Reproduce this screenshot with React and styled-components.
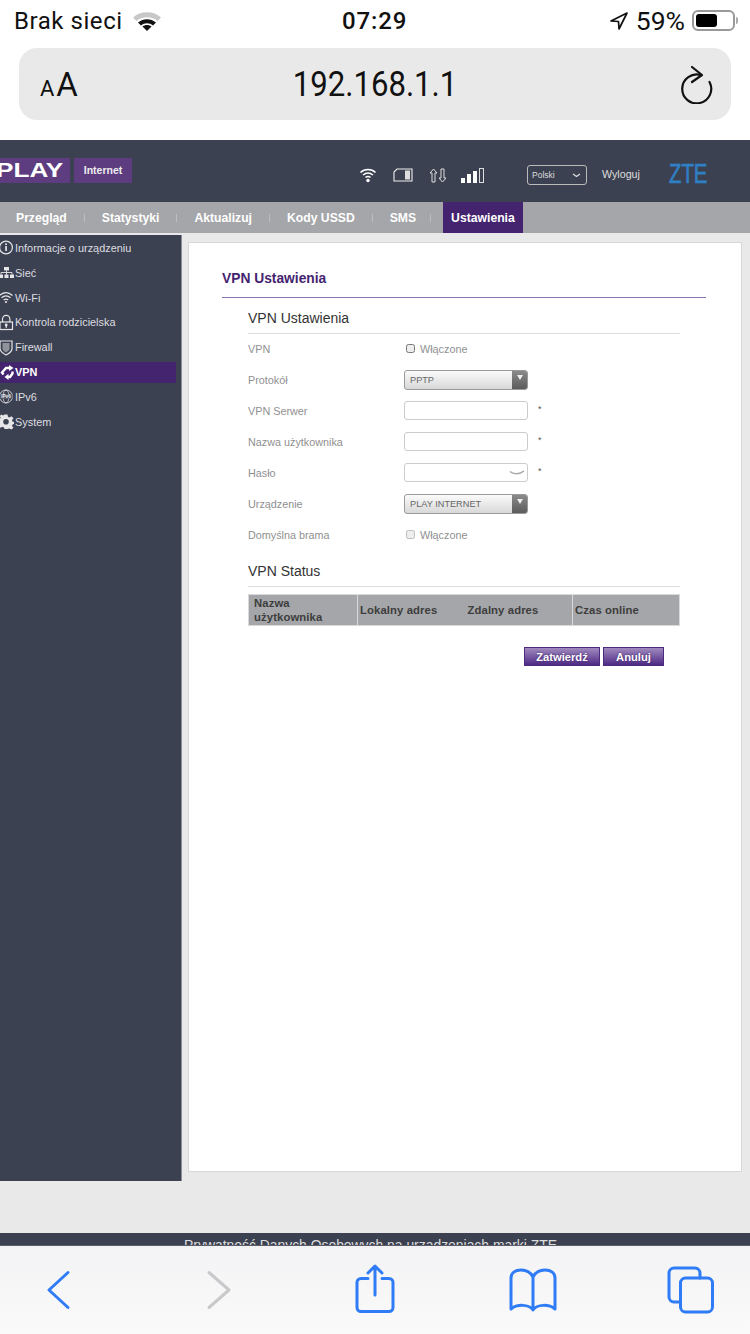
import React from "react";
import styled, { createGlobalStyle } from "styled-components";

const Global = createGlobalStyle`
  html, body { margin: 0; padding: 0; background: #fff; }
  * { box-sizing: border-box; }
  body { font-family: "Liberation Sans", Arial, sans-serif; }
`;

const Screen = styled.div`
  width: 750px; height: 1334px; overflow: hidden;
  display: flex; flex-direction: column; background: #e9e9e9;
`;
const Chrome = styled.header`
  height: 140px; background: #fff; padding: 0 15px 0 14px; flex: none;
`;
const StatusBar = styled.div`
  height: 48px; display: flex; justify-content: space-between; position: relative;
  align-items: center; font-family: Roboto, sans-serif; font-size: 24px; color: #111;
  padding-bottom: 7px;
`;
const StatusLeft = styled.div`display: flex; align-items: center; gap: 9px; letter-spacing: .55px;`;
const StatusRight = styled.div`display: flex; align-items: center; gap: 7px;`;
const Percent = styled.span`font-size: 26.5px; line-height: 28px;`;
const Clock = styled.div`
  position: absolute; left: 328px; top: 7px; font-weight: 500; letter-spacing: .9px; line-height: 28px;
`;
const Battery = styled.div`
  width: 43px; height: 21px; border: 2px solid #999; border-radius: 6px; padding: 2px; position: relative;
`;
const BatteryFill = styled.div`width: 21px; height: 100%; background: #000; border-radius: 3px;`;
const BatteryNub = styled.span`
  position: absolute; right: -5px; top: 5px; width: 2px; height: 7px; background: #aaa; border-radius: 0 2px 2px 0;
`;
const UrlBar = styled.div`
  margin: 0 4px 0 5px; height: 72px; border-radius: 18px; background: #e9e9e9;
  display: flex; align-items: center; justify-content: space-between; padding: 0 18px 0 21px;
  color: #111; position: relative;
`;
const AA = styled.div`display: flex; align-items: baseline; gap: 2px; font-family: Roboto, sans-serif; line-height: 1;`;
const SmallA = styled.span`font-size: 22px;`;
const BigA = styled.span`font-size: 33px;`;
const Url = styled.div`
  position: absolute; left: 0; right: 0; text-align: center; font-family: Roboto, sans-serif;
  font-size: 35px; transform: scaleX(.89);
`;

const TopBar = styled.div`
  height: 62px; background: #3c4151; display: flex; align-items: flex-start; flex: none; position: relative;
`;
const PlayLogo = styled.div`
  width: 70px; height: 25px; margin-top: 18px; background: #5d3d80; color: #fff;
  font-weight: 700; font-size: 19.5px; line-height: 25px; overflow: hidden; white-space: nowrap;
`;
const PlayText = styled.span`display: inline-block; transform: translateX(-4px) scaleX(1.34); transform-origin: left;`;
const InternetTag = styled.div`
  width: 58px; height: 25px; margin: 18px 0 0 4px; background: #5d3d80; color: #eee;
  font-weight: 700; font-size: 10.5px; line-height: 25px; text-align: center;
`;
const StatusIcons = styled.div`
  margin: 24px 0 0 227px; display: flex; align-items: center; gap: 16px; height: 22px;
`;
const LangBox = styled.div`
  margin: 25px 0 0 43px; width: 60px; height: 20px; border: 1px solid #bbb; border-radius: 3px;
  color: #ddd; font-size: 8.5px; display: flex; align-items: center; justify-content: space-between;
  padding: 0 5px 0 4px;
`;
const Logout = styled.div`margin: 27px 0 0 15px; color: #ddd; font-size: 10.7px; line-height: 15px;`;
const Zte = styled.div`
  margin: 19px 0 0 29px; color: #2f7fc4; font-size: 27.5px; line-height: 30px; font-weight: 400;
  transform: scaleX(.74); transform-origin: left;
  -webkit-text-stroke: .7px #2f7fc4;
`;

const Nav = styled.nav`
  height: 31px; background: #a5a6a9; display: flex; align-items: stretch; padding-left: 16px; flex: none;
`;
const NavItem = styled.div`
  display: flex; align-items: center; color: #fff; font-weight: 700; font-size: 12.2px;
  padding: ${p => (p.$active ? "0 8px" : "0")};
  margin-left: ${p => (p.$active ? "-2px" : "0")};
  background: ${p => (p.$active ? "#45246f" : "transparent")};
`;
const NavSep = styled.span`
  align-self: center; width: 1px; height: 8px; background: #bcbdc0; margin: 0 ${p => p.$m}px;
`;
const Spacer = styled.div`height: 2px; background: #e9e9e9; flex: none;`;

const Body = styled.div`height: 946px; display: flex; align-items: flex-start; flex: none;`;
const Sidebar = styled.aside`
  width: 182px; height: 100%; background: #3c4151; border-right: 1px solid #8b8e96; padding-top: 2.4px; flex: none;
  display: flex; flex-direction: column; align-items: stretch;
`;
const SideRow = styled.div`
  height: 21px; margin-bottom: 3.85px; width: 176px; display: flex; align-items: center; gap: 1px;
  color: ${p => (p.$active ? "#fff" : "#dcdde0")};
  background: ${p => (p.$active ? "#45246f" : "transparent")};
  font-size: 10.9px; font-weight: ${p => (p.$active ? 700 : 400)};
  white-space: nowrap;
`;
const SideIcon = styled.svg`width: 15px; height: 17px; flex: none; display: block; margin-left: -1px; overflow: hidden;`;

const Panel = styled.main`
  margin: 7px 8px 0 6px; width: 554px; height: 930px; background: #fff; border: 1px solid #d8d8d8;
  padding: 27px 35px 0 33px;
`;
const PageTitle = styled.h1`
  margin: 0; font-size: 13.8px; font-weight: 700; color: #45246f; line-height: 18px; height: 28px;
  border-bottom: 1px solid #8a74ad;
`;
const Section = styled.div`padding: 0 26px;`;
const SectionTitle = styled.h2`
  margin: 0; font-size: 14px; font-weight: 400; color: #333; line-height: 20px; height: 36px;
  padding-top: 10px; border-bottom: 1px solid #ddd;
  &:not(:first-child) { margin-top: 1px; }
`;
const Form = styled.div`display: flex; flex-direction: column; margin-top: -1px;`;
const FormRow = styled.div`
  height: 31px; display: grid; grid-template-columns: 156px 124px auto; align-items: center;
  color: #909090; font-size: 10.8px;
`;
const CheckLine = styled.div`display: flex; align-items: center; gap: 5px; padding-left: 2px; color: #909090;`;
const CheckBox = styled.span`
  width: 9px; height: 9px; border-radius: 2.5px; background: #eee;
  border: 1px solid ${p => (p.$dim ? "#bbb" : "#777")};
`;
const SelectBox = styled.div`
  height: 20px; border: 1px solid #9a9a9a; border-radius: 3px; display: flex; overflow: hidden;
  background: linear-gradient(#fbfbfb, #d8d8d8); color: #666; font-size: 9.2px; align-items: center;
  padding-left: 5px; justify-content: space-between;
`;
const SelectArrow = styled.div`
  width: 15px; height: 100%; background: linear-gradient(#8a8a8a, #5c5c5c);
  display: flex; justify-content: center; padding-top: 4px;
`;
const Arrow = styled.span`
  width: 0; height: 0; border-left: 3px solid transparent; border-right: 3px solid transparent;
  border-top: 5px solid #eee;
`;
const InputBox = styled.div`
  height: 19px; border: 1px solid #ccc; border-radius: 3px; background: #fff;
  display: flex; align-items: center; justify-content: flex-end; padding-right: 2px;
`;
const Star = styled.span`margin-left: 10px; margin-top: -3px; color: #555; font-size: 9px;`;
const StatusTable = styled.table`
  width: 431px; margin-top: 7px; border-collapse: collapse; table-layout: fixed; background: #a5a6a9;
`;
const Th = styled.th`
  height: 31px; padding: 0 ${p => p.$pad || 2}px; text-align: left; font-size: 11.3px; line-height: 14px;
  color: #3d3d3d; font-weight: 700; letter-spacing: .1px;
  border: 1px solid #d9d9d9; border-left: ${p => (p.$noLeft ? "none" : "1px solid #d9d9d9")};
  border-right: ${p => (p.$noRight ? "none" : "1px solid #d9d9d9")}; width: ${p => p.$w}px;
`;
const Actions = styled.div`
  display: flex; justify-content: flex-end; gap: 3px; padding: 21px 16px 0 0;
`;
const Btn = styled.button`
  height: 19px; width: ${p => p.$w}px; padding: 0; border: 1px solid #4b2b80; border-radius: 0;
  background: linear-gradient(#a08abf, #4e2a85); color: #fff; font: 700 11.2px "Liberation Sans", sans-serif;
  text-shadow: 0 0 2px #3b1e66;
`;

const Gap = styled.div`height: 52px; flex: none;`;
const Footer = styled.footer`
  height: 12px; background: #3c4151; overflow: hidden; color: #ddd; font-size: 13.9px; text-align: center;
  padding: 4px 9px 0 0; line-height: 16px; flex: none;
`;
const Toolbar = styled.div`
  flex: 1; background: linear-gradient(#f3f3f5, #fafafa); border-top: 1px solid #5b5e68;
  display: flex; justify-content: space-between; padding: 18px 35px 0;
`;
const ToolIcon = styled.svg`width: 48px; height: 50px; display: block; fill: none; stroke-linecap: round; stroke-linejoin: round;`;

const side = [
  ["info", "Informacje o urządzeniu"], ["net", "Sieć"], ["wifi", "Wi-Fi"], ["lock", "Kontrola rodzicielska"],
  ["shield", "Firewall"], ["vpn", "VPN"], ["ipv6", "IPv6"], ["gear", "System"],
];

const SideGlyph = ({ k }) => {
  const s = { fill: "none", stroke: "#e6e6e8", strokeWidth: 1.2 };
  const f = { fill: "#e6e6e8", stroke: "none" };
  return (
    <SideIcon viewBox="0 0 15 17">
      {k === "info" && <><circle cx="7" cy="8.5" r="6.4" {...s} /><rect x="6.2" y="7" width="1.7" height="5" {...f} /><rect x="6.2" y="4.3" width="1.7" height="1.7" {...f} /></>}
      {k === "net" && <><rect x="5" y="3" width="5" height="3.5" {...f} /><rect x="0" y="10.5" width="4" height="3.5" {...f} /><rect x="5.5" y="10.5" width="4" height="3.5" {...f} /><rect x="11" y="10.5" width="4" height="3.5" {...f} /><path d="M2 10.5V8.5H13V10.5M7.5 6.5V10.5" {...s} strokeWidth=".9" /></>}
      {k === "wifi" && <><path d="M0.5 6.5C4.5 3 9.5 3 13.5 6.5M2.5 8.8C5.2 6.6 8.8 6.6 11.5 8.8M4.7 11C6 10 8 10 9.3 11" {...s} /><circle cx="7" cy="13" r="1.1" {...f} /></>}
      {k === "lock" && <><path d="M3.5 8V5a3.7 3.7 0 0 1 7.4 0V8" {...s} /><rect x="1" y="8" width="12.5" height="7.5" {...s} /><circle cx="7.2" cy="11" r="1.4" {...f} /><rect x="6.6" y="11" width="1.3" height="2.8" {...f} /></>}
      {k === "shield" && <><path d="M1 2H13V9.5C13 12.5 10 14.5 7 16C4 14.5 1 12.5 1 9.5Z" {...s} /><path d="M3.5 4H10.5V9.5C10.5 11 9 12.4 7 13.4C5 12.4 3.5 11 3.5 9.5Z" {...f} opacity=".5" /></>}
      {k === "vpn" && <><path d="M10 4H7L3 8.500 4.500 10.500" fill="none" stroke="#fff" strokeWidth="2.400" /><path d="M10 1V7L14.500 4Z" fill="#fff" /><path d="M13.500 7.500V9.500L11 13H9" fill="none" stroke="#fff" strokeWidth="2.400" /><path d="M9.500 9.800V16L5.500 12.900Z" fill="#fff" /></>}
      {k === "ipv6" && <><circle cx="7" cy="8.5" r="6.5" {...s} strokeWidth=".8" /><ellipse cx="7" cy="8.5" rx="3" ry="6.5" {...s} strokeWidth=".7" /><rect x="0.5" y="6.3" width="13" height="4.6" rx="1" fill="#555a69" /><text x="7" y="10.2" fontSize="4.6" fontWeight="700" textAnchor="middle" fill="#eee" fontFamily="Liberation Sans">IPv6</text></>}
      {k === "gear" && <><path d="M5.500 1.500H8.500L9 3.700 10.500 4.400 12.400 3.200 14.500 5.300 13 7 13.500 8.500 15 9V11L13.500 11.500 13 13 14.500 14.700 12.400 16.500 10.500 15.500 8.500 16H5.500L5 14.400 3.500 13.700 1.600 14.800 0 13 1 11.200 .6 9.500-1 9V7L.6 6.400 1.700 4.600.6 3 2.400 1.500 4.100 2.600Z" {...f} /><circle cx="7" cy="8.800" r="2.800" fill="#3c4151" /></>}
    </SideIcon>
  );
};

const navItems = ["Przegląd", "Statystyki", "Aktualizuj", "Kody USSD", "SMS"];
const fields = [
  ["VPN", "check"], ["Protokół", "select", "PPTP"], ["VPN Serwer", "input"], ["Nazwa użytkownika", "input"],
  ["Hasło", "password"], ["Urządzenie", "select", "PLAY INTERNET"], ["Domyślna brama", "checkdim"],
];

const Field = ({ label, kind, value }) => (
  <FormRow>
    <span>{label}</span>
    {(kind === "check" || kind === "checkdim") && (
      <CheckLine><CheckBox $dim={kind === "checkdim"} /><span>Włączone</span></CheckLine>
    )}
    {kind === "select" && <SelectBox><span>{value}</span><SelectArrow><Arrow /></SelectArrow></SelectBox>}
    {(kind === "input" || kind === "password") && (
      <InputBox>
        {kind === "password" && (
          <svg width="16" height="6" viewBox="0 0 16 6"><path d="M1 1.500C4 4.500 11 4.500 15 1" fill="none" stroke="#aaa" strokeWidth="1.600" /></svg>
        )}
      </InputBox>
    )}
    {(kind === "input" || kind === "password") && <Star>*</Star>}
  </FormRow>
);

export default function App() {
  return (
    <Screen>
      <Global />
      <Chrome>
        <StatusBar>
          <StatusLeft>
            <span>Brak sieci</span>
            <svg width="30" height="22" viewBox="0 0 30 22">
              <path d="M1 7.500C8 .5 22 .5 29 7.500L25.500 11C20 6 10 6 4.500 11Z" fill="#c8c8c8" />
              <path d="M6 12.500C11 8 19 8 24 12.500L21 15.500C17.500 12.500 12.500 12.500 9 15.500Z" fill="#111" />
              <path d="M10.500 16.500C13 14.500 17 14.500 19.500 16.500L15 21Z" fill="#111" />
            </svg>
          </StatusLeft>
          <Clock>07:29</Clock>
          <StatusRight>
            <svg width="20" height="20" viewBox="0 0 20 20"><path d="M18 2 2 10 9.500 10.500 10 18Z" fill="none" stroke="#111" strokeWidth="1.700" strokeLinejoin="round" /></svg>
            <Percent>59%</Percent>
            <Battery><BatteryFill /><BatteryNub /></Battery>
          </StatusRight>
        </StatusBar>
        <UrlBar>
          <AA><SmallA>A</SmallA><BigA>A</BigA></AA>
          <Url>192.168.1.1</Url>
          <svg width="32" height="40" viewBox="0 0 32 40">
            <path d="M20 11A14.500 14.500 0 1 0 28.500 18" fill="none" stroke="#111" strokeWidth="2.200" strokeLinecap="round" />
            <path d="M11 3 21 11 11 18" fill="none" stroke="#111" strokeWidth="2.200" strokeLinecap="round" strokeLinejoin="round" />
          </svg>
        </UrlBar>
      </Chrome>
      <TopBar>
        <PlayLogo><PlayText>PLAY</PlayText></PlayLogo>
        <InternetTag>Internet</InternetTag>
        <StatusIcons>
          <svg width="18" height="18" viewBox="0 0 18 18" fill="none" stroke="#fff" strokeWidth="1.500">
            <path d="M1.500 6.500C5.500 2.500 12.500 2.500 16.500 6.500M4 9C7 6.500 11 6.500 14 9M6.500 11.300C8 10.300 10 10.300 11.500 11.300" /><circle cx="9" cy="14.500" r="1.700" fill="#fff" stroke="none" />
          </svg>
          <svg width="20" height="14" viewBox="0 0 20 14" fill="none" stroke="#eee" strokeWidth="1.100">
            <path d="M4 1H19V13H1V4Z" /><rect x="12" y="2.500" width="5" height="9" fill="#ddd" stroke="none" />
          </svg>
          <svg width="17" height="15" viewBox="0 0 17 15" fill="none" stroke="#ddd" strokeWidth="1">
            <path d="M4.500 1 1 5H3V14H6V5H8ZM10 10H12V1H15V10H17L13.500 14Z" />
          </svg>
          <svg width="23" height="15" viewBox="0 0 23 15" style={{ marginLeft: -1 }}>
            <rect x="0" y="10" width="4" height="5" fill="#fff" /><rect x="6" y="6" width="4" height="9" fill="#fff" /><rect x="12" y="3" width="4" height="12" fill="#fff" /><rect x="18.500" y=".5" width="4" height="14" fill="none" stroke="#ddd" />
          </svg>
        </StatusIcons>
        <LangBox>
          <span>Polski</span>
          <svg width="9" height="5" viewBox="0 0 9 5"><path d="M1 1 4.500 3.500 8 1" fill="none" stroke="#ddd" strokeWidth="1.200" /></svg>
        </LangBox>
        <Logout>Wyloguj</Logout>
        <Zte>ZTE</Zte>
      </TopBar>
      <Nav>
        {navItems.map(n => (
          <React.Fragment key={n}>
            <NavItem>{n}</NavItem>
            <NavSep $m={n === "SMS" ? 14 : 17} />
          </React.Fragment>
        ))}
        <NavItem $active>Ustawienia</NavItem>
      </Nav>
      <Spacer />
      <Body>
        <Sidebar>
          {side.map(([k, t]) => (
            <SideRow key={k} $active={k === "vpn"}><SideGlyph k={k} /><span>{t}</span></SideRow>
          ))}
        </Sidebar>
        <Panel>
          <PageTitle>VPN Ustawienia</PageTitle>
          <Section>
            <SectionTitle>VPN Ustawienia</SectionTitle>
            <Form>
              {fields.map(([l, k, v]) => <Field key={l} label={l} kind={k} value={v} />)}
            </Form>
            <SectionTitle>VPN Status</SectionTitle>
            <StatusTable>
              <thead>
                <tr>
                  <Th $w={109} $pad={5}>Nazwa użytkownika</Th>
                  <Th $w={108} $noRight>Lokalny adres</Th>
                  <Th $w={107} $noLeft>Zdalny adres</Th>
                  <Th $w={107}>Czas online</Th>
                </tr>
              </thead>
            </StatusTable>
            <Actions>
              <Btn $w={76}>Zatwierdź</Btn>
              <Btn $w={61}>Anuluj</Btn>
            </Actions>
          </Section>
        </Panel>
      </Body>
      <Gap />
      <Footer>Prywatność Danych Osobowych na urządzeniach marki ZTE</Footer>
      <Toolbar>
        <ToolIcon viewBox="0 0 48 50" stroke="#2f7cf6" strokeWidth="3"><path d="M33 8.500 14 26 33 43.500" /></ToolIcon>
        <ToolIcon viewBox="0 0 48 50" stroke="#c9c9cb" strokeWidth="3"><path d="M16 8.500 36 26 16 43.500" /></ToolIcon>
        <ToolIcon viewBox="0 0 48 50" stroke="#2f7cf6" strokeWidth="3"><path d="M17 14.500H10A4 4 0 0 0 6 18.500V43.500A4 4 0 0 0 10 47.500H38A4 4 0 0 0 42 43.500V18.500A4 4 0 0 0 38 14.500H31" /><path d="M24 31V2M17 9 24 2 31 9" /></ToolIcon>
        <ToolIcon viewBox="0 0 48 50" stroke="#2f7cf6" strokeWidth="3"><path d="M24 46C20 40 8 40 2 45V14C2 9 6 6 12 6C18 6 22 9 24 13C26 9 30 6 36 6C42 6 46 9 46 14V45C40 40 28 40 24 46ZM24 13V44" /></ToolIcon>
        <ToolIcon viewBox="0 0 48 50" stroke="#2f7cf6" strokeWidth="3"><path d="M13 38H7A5 5 0 0 1 2 33V9A5 5 0 0 1 7 4H28A5 5 0 0 1 33 9V14" /><rect x="13.500" y="14" width="32" height="34" rx="5" /></ToolIcon>
      </Toolbar>
    </Screen>
  );
}
